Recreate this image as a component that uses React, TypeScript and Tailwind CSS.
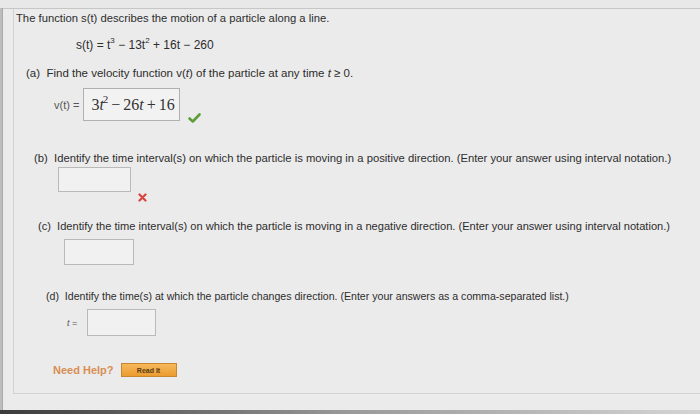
function Sup({ children }: { children: React.ReactNode }) {
  return <sup className="text-[8px] relative -top-[1px] align-super leading-none">{children}</sup>;
}

function AnswerBox({ className }: { className: string }) {
  return <div className={`border border-[#b9b9b9] bg-[#f1f1f1] ${className}`} />;
}

function Check() {
  return (
    <svg width="13" height="10" viewBox="0 0 13 10" className="shrink-0">
      <path d="M1.5 5.5 L4.8 8.5 L11.5 1.5" fill="none" stroke="#5c9f3a" strokeWidth="2.6" strokeLinecap="round" strokeLinejoin="round" />
    </svg>
  );
}

function Cross() {
  return (
    <svg width="9" height="9" viewBox="0 0 9 9" className="shrink-0">
      <path d="M1.5 1.5 L7.5 7.5 M7.5 1.5 L1.5 7.5" stroke="#d8453d" strokeWidth="2.2" strokeLinecap="round" />
    </svg>
  );
}

export default function App() {
  return (
    <div className="w-[700px] h-[414px] overflow-hidden bg-[#ebebeb] flex flex-col font-['Liberation_Sans',Arial,sans-serif] text-[#2d2d2d]">
      <div className="h-2 shrink-0 bg-[#e8e8e8]" />
      <div className="flex flex-1">
        <div className="w-[3px] bg-[#bdbdbd] border-r border-[#a9a9a9]" />
        <div className="flex-1 border-t border-[#c6c6c6] flex flex-col">
          <div className="ml-[10px] border-l border-b border-[#d2d2d2] pb-4 text-[11.25px] leading-[14px]">
            <p className="pl-[2px] mt-[2px]">The function s(t) describes the motion of a particle along a line.</p>

            <p className="pl-[62px] mt-[13px] text-[12px]">
              s(t) = t<Sup>3</Sup> − 13t<Sup>2</Sup> + 16t − 260
            </p>

            <p className="pl-[12px] mt-[14px] text-[11.5px]">
              (a)&nbsp;&nbsp;Find the velocity function v(<i>t</i>) of the particle at any time <i>t</i> ≥ 0.
            </p>

            <div className="flex items-end gap-[8px] pl-[40px] mt-2">
              <div className="flex items-center gap-[4px] self-center">
                <span className="text-[11px] text-[#555]">v(t) =</span>
                <div className="w-[97px] h-[33px] border border-[#b0b0b0] bg-[#f2f2f2] flex items-center pl-[7px] font-['Liberation_Serif',serif] text-[16px] text-[#333] whitespace-nowrap">
                  3<i>t</i>
                  <sup className="text-[11px] -ml-[1px]">2</sup>
                  <span className="mx-[3px]">−</span>26<i>t</i>
                  <span className="mx-[3px]">+</span>16
                </div>
              </div>
              <div className="-mb-[2px]">
                <Check />
              </div>
            </div>

            <p className="pl-[20px] mt-[30px]">
              (b)&nbsp;&nbsp;Identify the time interval(s) on which the particle is moving in a positive direction. (Enter your answer using interval notation.)
            </p>

            <div className="flex items-start gap-[7px] pl-[44px] mt-[2px]">
              <AnswerBox className="w-[73px] h-[25px]" />
              <div className="mt-[26px]">
                <Cross />
              </div>
            </div>

            <p className="pl-[24px] mt-[17px] text-[11.1px]">
              (c)&nbsp;&nbsp;Identify the time interval(s) on which the particle is moving in a negative direction. (Enter your answer using interval notation.)
            </p>

            <div className="pl-[50px] mt-[6px]">
              <AnswerBox className="w-[70px] h-[26px]" />
            </div>

            <p className="pl-[32px] mt-[24px] text-[10.6px]">
              (d)&nbsp;&nbsp;Identify the time(s) at which the particle changes direction. (Enter your answers as a comma-separated list.)
            </p>

            <div className="flex items-center gap-[10px] pl-[53px] mt-[6px]">
              <span className="text-[9px] text-[#555]">
                <i>t</i> =
              </span>
              <AnswerBox className="w-[69px] h-[27px]" />
            </div>

            <div className="flex items-center gap-[7px] pl-[39px] mt-[27px]">
              <span className="text-[11px] font-bold text-[#d88d55]">Need Help?</span>
              <button className="w-[56px] h-[14px] border border-[#c7862f] bg-gradient-to-b from-[#f6b85a] to-[#eb9c2f] text-[7px] font-bold text-[#5a3a12] leading-none">
                Read It
              </button>
            </div>
          </div>
          <div className="flex-1" />
        </div>
      </div>
      <div className="h-[4px] shrink-0 bg-gradient-to-r from-[#3b3b3b] via-[#9a9a9a] to-[#d4d4d4]" />
    </div>
  );
}
